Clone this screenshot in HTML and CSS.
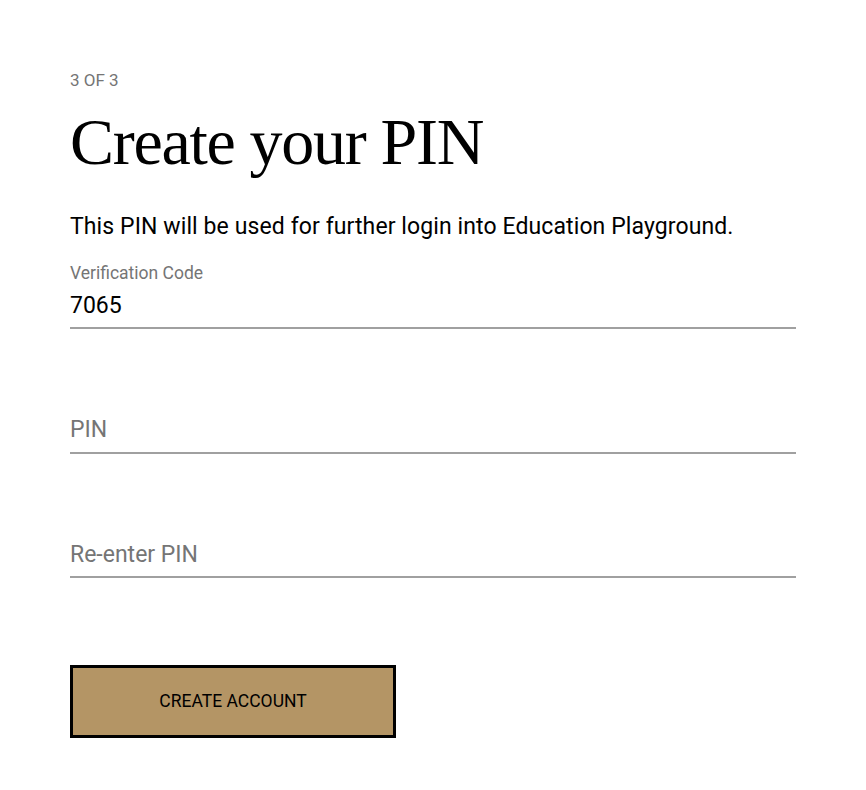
FILE: index.html
```html
<!DOCTYPE html>
<html lang="en">
<head>
<meta charset="utf-8">
<title>Create your PIN</title>
<link rel="stylesheet" href="styles.css">
</head>
<body>
<main class="page">
  <div class="step">3 OF 3</div>
  <h1 class="title">Create your PIN</h1>
  <p class="lead">This PIN will be used for further login into Education Playground.</p>
  <form class="form">
    <div class="field">
      <label class="label" for="code">Verification Code</label>
      <input class="input" id="code" type="text" value="7065">
    </div>
    <div class="field">
      <span class="label"></span>
      <input class="input" type="password" placeholder="PIN">
    </div>
    <div class="field">
      <span class="label"></span>
      <input class="input" type="password" placeholder="Re-enter PIN">
    </div>
    <button class="btn" type="button">CREATE ACCOUNT</button>
  </form>
</main>
</body>
</html>
```
FILE: styles.css
```css
* { box-sizing: border-box; }
html, body { margin: 0; padding: 0; background: #fff; }
body { font-family: Roboto, "Liberation Sans", Arial, sans-serif; color: #000; }

.page {
  width: 866px;
  padding: 70px 70px 0 70px;
}

.step {
  font-size: 17px;
  line-height: 20px;
  color: #757575;
}

.title {
  margin: 16px 0 0 0;
  font-family: "Liberation Serif", "Times New Roman", serif;
  font-weight: 400;
  font-size: 66px;
  line-height: 72px;
  letter-spacing: -1.3px;
  color: #000;
}

.lead {
  margin: 35px 0 0 0;
  font-size: 23px;
  line-height: 28px;
  letter-spacing: 0.1px;
  color: #000;
}

.form {
  display: flex;
  flex-direction: column;
  width: 726px;
  margin-top: 22px;
}

.field {
  display: flex;
  flex-direction: column;
  gap: 8px;
}
.field + .field { margin-top: 58.5px; }

.label {
  display: block;
  height: 20px;
  font-size: 17.5px;
  line-height: 20px;
  color: #757575;
}

.input {
  display: block;
  width: 100%;
  height: 38px;
  margin: 0;
  padding: 0 0 8px 0;
  border: none;
  border-bottom: 2px solid #a0a0a0;
  outline: none;
  background: transparent;
  font-family: Roboto, "Liberation Sans", Arial, sans-serif;
  font-size: 23px;
  line-height: 28px;
  color: #000;
}
.input::placeholder { color: #757575; opacity: 1; }

.btn {
  align-self: flex-start;
  margin-top: 86.5px;
  width: 326px;
  height: 73px;
  border: 3px solid #000;
  background: #b49565;
  font-family: Roboto, "Liberation Sans", Arial, sans-serif;
  font-size: 17.5px;
  color: #000;
  cursor: pointer;
}
```
